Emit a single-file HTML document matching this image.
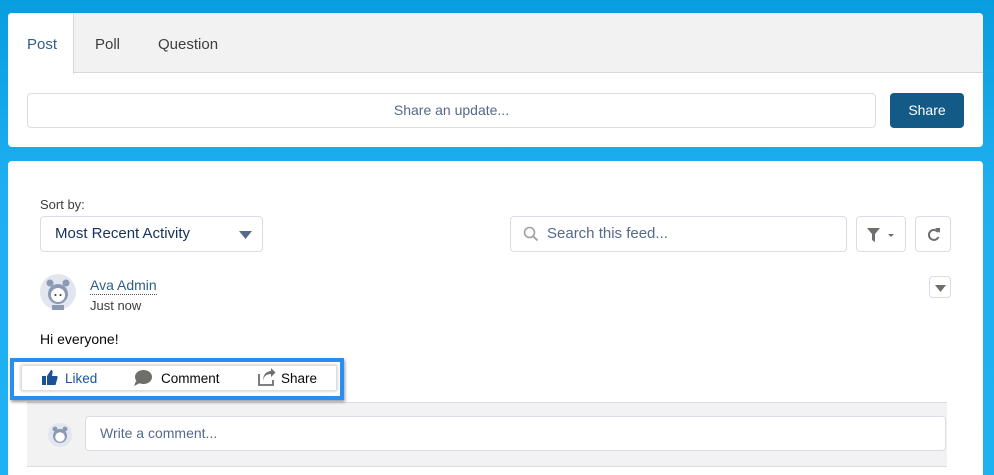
<!DOCTYPE html>
<html style="width:994px;height:475px;overflow:hidden"><head><style>
*{box-sizing:border-box;margin:0;padding:0}
body{width:994px;height:475px;overflow:hidden;background:linear-gradient(#079ddf,#1eaff0 40%,#1fb2f2);font-family:"Liberation Sans",sans-serif;position:relative;color:#16325c}
.card{position:absolute;background:#fff;border-radius:4px}
.abs{position:absolute}
.btnbox{position:absolute;border:1px solid #d8dde6;border-radius:4px;background:#fff}
</style></head><body>
<div class="card" style="left:8px;top:13px;width:975px;height:134px;overflow:hidden">
  <div class="abs" style="left:0;top:0;width:975px;height:60px;background:#f2f2f2;border-bottom:1px solid #d8d8d8"></div>
  <div class="abs" style="left:0;top:0;width:66px;height:61px;background:#fff;border-right:1px solid #d8d8d8"></div>
  <div class="abs" style="left:19px;top:23px;font-size:15px;color:#2f5f87">Post</div>
  <div class="abs" style="left:87px;top:23px;font-size:15px;color:#3e3e3c">Poll</div>
  <div class="abs" style="left:150px;top:23px;font-size:15px;color:#3e3e3c">Question</div>
  <div class="btnbox" style="left:19px;top:80px;width:849px;height:35px;text-align:center;line-height:33px;font-size:14px;color:#54698d">Share an update...</div>
  <div class="abs" style="left:882px;top:80px;width:74px;height:35px;background:#135a86;border-radius:4px;color:#fff;font-size:14px;text-align:center;line-height:35px">Share</div>
</div>
<div class="card" style="left:8px;top:161px;width:975px;height:314px;border-radius:4px 4px 0 0;overflow:hidden">
  <div class="abs" style="left:32px;top:36px;font-size:13px;color:#3e3e3c">Sort by:</div>
  <div class="btnbox" style="left:32px;top:55px;width:223px;height:36px;font-size:15px;color:#16325c;line-height:34px;padding-left:14px">Most Recent Activity
    <svg class="abs" style="left:198px;top:14px" width="13" height="8"><path d="M0 0H13L6.5 8Z" fill="#54698d"/></svg></div>
  <div class="btnbox" style="left:502px;top:55px;width:337px;height:36px;font-size:15px;color:#54698d;line-height:34px;padding-left:36px">Search this feed...
    <svg class="abs" style="left:12px;top:9px" width="16" height="16"><circle cx="6.5" cy="6.5" r="5" fill="none" stroke="#a0a0a0" stroke-width="1.6"/><path d="M10 10L14.5 14.5" stroke="#a0a0a0" stroke-width="1.8"/></svg></div>
  <div class="btnbox" style="left:848px;top:55px;width:50px;height:36px">
    <svg class="abs" style="left:10px;top:11px" width="30" height="14"><path d="M0 0H13L8 6V14L5 12V6Z" fill="#706e6b"/><path d="M21 6H27L24 9Z" fill="#706e6b"/></svg></div>
  <div class="btnbox" style="left:907px;top:55px;width:36px;height:36px">
    <svg class="abs" style="left:10px;top:10px" width="16" height="16"><path d="M12 5A5 5 0 1 0 12.5 10" fill="none" stroke="#706e6b" stroke-width="2"/><path d="M9 1L14 1L14 6Z" fill="#706e6b"/></svg></div>
  <svg class="abs" style="left:32px;top:113px" width="36" height="36"><circle cx="18" cy="18" r="18" fill="#e2e6ee"/><circle cx="18" cy="20" r="10" fill="#8a9ab4"/><circle cx="18" cy="21" r="7" fill="#fff"/><circle cx="10" cy="9" r="3.5" fill="#8a9ab4"/><circle cx="26" cy="9" r="3.5" fill="#8a9ab4"/><circle cx="15.5" cy="21" r="1" fill="#333"/><circle cx="20.5" cy="21" r="1" fill="#333"/><path d="M12 31h12v5H12z" fill="#8a9ab4"/></svg>
  <div class="abs" style="left:82px;top:115px;font-size:14px;color:#2f5f87;border-bottom:1px dotted #555;line-height:18px">Ava Admin</div>
  <div class="abs" style="left:82px;top:137px;font-size:13px;color:#3e3e3c">Just now</div>
  <div class="btnbox" style="left:921px;top:115px;width:22px;height:22px">
    <svg class="abs" style="left:5px;top:8px" width="11" height="7"><path d="M0 0H11L5.5 7Z" fill="#706e6b"/></svg></div>
  <div class="abs" style="left:32px;top:170px;font-size:14px;color:#080707">Hi everyone!</div>
  <div class="abs" style="left:19px;top:241px;width:920px;height:65px;background:#f3f2f2;border-top:1px solid #d8dde6;border-bottom:1px solid #d8dde6"></div>
  <svg class="abs" style="left:40px;top:262px" width="24" height="24"><circle cx="12" cy="12" r="12" fill="#e2e6ee"/><circle cx="12" cy="13" r="7" fill="#8a9ab4"/><circle cx="12" cy="14" r="4.8" fill="#fff"/><circle cx="7" cy="6" r="2.4" fill="#8a9ab4"/><circle cx="17" cy="6" r="2.4" fill="#8a9ab4"/></svg>
  <div class="btnbox" style="left:77px;top:255px;width:861px;height:35px;font-size:14px;color:#54698d;line-height:33px;padding-left:14px">Write a comment...</div>
</div>
<div class="abs" style="left:10px;top:358px;width:334px;height:42px;border:4px solid #2a8ef0;background:#fff;box-shadow:1px 2px 3px rgba(0,0,0,.4)">
  <div class="abs" style="left:7px;top:3px;width:316px;height:26px;border:1px solid #ddd;box-shadow:0 0 3px rgba(0,0,0,.25)"></div>
  <svg class="abs" style="left:28px;top:8px" width="16" height="15"><rect x="0" y="6" width="4" height="9" fill="#1b5297"/><path d="M5 6L9 0Q11 0 10.5 3L10 6H15Q16 7 15.5 8L13.5 15H5Z" fill="#1b5297"/></svg>
  <div class="abs" style="left:51px;top:9px;font-size:13.5px;color:#1b5297">Liked</div>
  <svg class="abs" style="left:120px;top:8px" width="18" height="16"><ellipse cx="9.5" cy="7" rx="8.5" ry="7" fill="#706e6b"/><path d="M2 11L0 16L6 13Z" fill="#706e6b"/></svg>
  <div class="abs" style="left:147px;top:9px;font-size:13.5px;color:#080707">Comment</div>
  <svg class="abs" style="left:244px;top:6px" width="18" height="18"><path d="M1 6V17H15V12" fill="none" stroke="#706e6b" stroke-width="1.8"/><path d="M5 13Q6 6 13 6V9L17.5 4.5L13 0V3Q5 4 5 13Z" fill="#706e6b"/></svg>
  <div class="abs" style="left:267px;top:9px;font-size:13.5px;color:#080707">Share</div>
</div>
</body></html>
